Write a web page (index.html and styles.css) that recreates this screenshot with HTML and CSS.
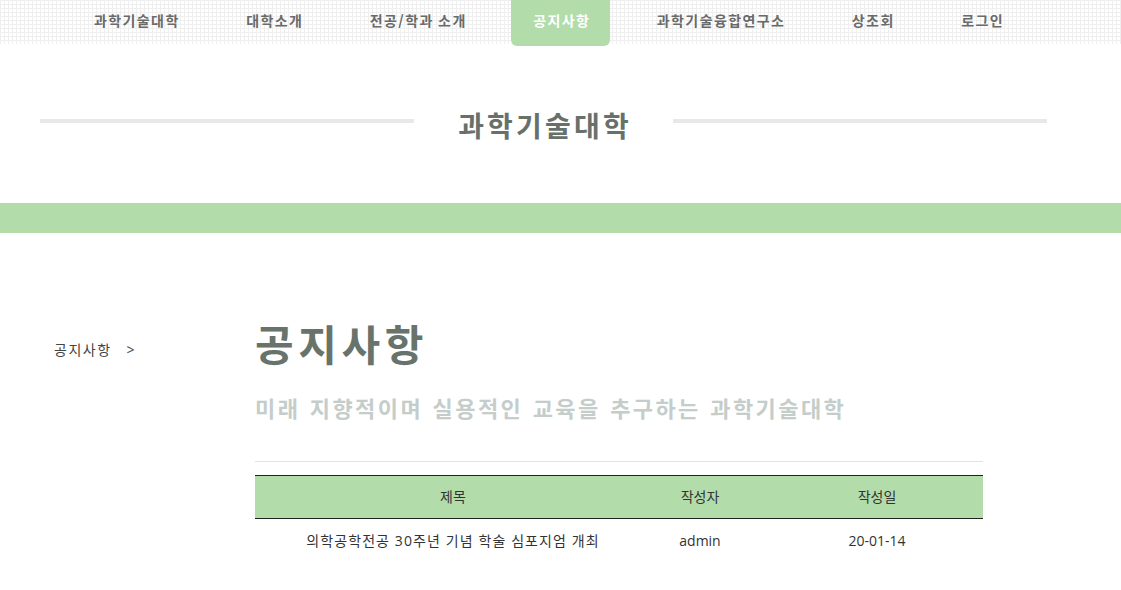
FILE: index.html
```html
<!DOCTYPE html>
<html lang="ko">
<head>
<meta charset="utf-8">
<title>공지사항 - 과학기술대학</title>
<link rel="stylesheet" href="styles.css">
</head>
<body>
<nav class="gnb">
  <ul class="gnb-list">
    <li class="gnb-item">과학기술대학</li>
    <li class="gnb-item">대학소개</li>
    <li class="gnb-item">전공/학과 소개</li>
    <li class="gnb-item active">공지사항</li>
    <li class="gnb-item">과학기술융합연구소</li>
    <li class="gnb-item">상조회</li>
    <li class="gnb-item">로그인</li>
  </ul>
</nav>

<header class="site-head">
  <div class="head-row">
    <span class="head-line"></span>
    <h1 class="head-title">과학기술대학</h1>
    <span class="head-line"></span>
  </div>
</header>

<div class="band"></div>

<main class="main">
  <aside class="side">
    <span class="side-link">공지사항</span><span class="side-arrow">&gt;</span>
  </aside>
  <section class="content">
    <h2 class="page-title">공지사항</h2>
    <p class="page-sub">미래 지향적이며 실용적인 교육을 추구하는 과학기술대학</p>
    <div class="divider"></div>
    <div class="board">
      <div class="board-row board-head">
        <div class="c1">제목</div>
        <div class="c2">작성자</div>
        <div class="c3">작성일</div>
      </div>
      <div class="board-row board-body">
        <div class="c1 subject">의학공학전공 30주년 기념 학술 심포지엄 개최</div>
        <div class="c2">admin</div>
        <div class="c3">20-01-14</div>
      </div>
    </div>
  </section>
</main>
</body>
</html>
```

FILE: styles.css
```css
* { box-sizing: border-box; }
body {
  margin: 0;
  background: #fff;
  font-family: "Open Sans", "Noto Sans CJK KR", sans-serif;
  color: #333;
}

/* top navigation */
.gnb {
  height: 44px;
  background-color: #fff;
  background-image:
    linear-gradient(#efefef 1px, transparent 1px),
    linear-gradient(90deg, #efefef 1px, transparent 1px);
  background-size: 4px 4px;
}
.gnb-list {
  list-style: none;
  margin: 0;
  padding: 0 0 0 72px;
  display: flex;
  gap: 24.5px;
}
.gnb-item {
  padding: 0 20px 0 22px;
  height: 42px;
  line-height: 41px;
  font-family: "Noto Sans CJK KR", sans-serif;
  font-size: 14px;
  font-weight: 700;
  color: #6a6a6a;
  letter-spacing: 1.4px;
  word-spacing: -1px;
  white-space: nowrap;
}
.gnb-item.active {
  height: 46px;
  background: #b2ddab;
  color: #fff;
  border-radius: 0 0 6px 6px;
}

/* header */
.site-head {
  padding: 62px 0 59px;
}
.head-row {
  margin-left: 40px;
  width: 1007px;
  display: flex;
  align-items: center;
}
.head-line {
  flex: 1;
  height: 4px;
  background: #e8e8e8;
  margin-bottom: 8px;
}
.head-title {
  margin: 0;
  padding: 0 41px 0 44px;
  font-family: "Noto Sans CJK KR", sans-serif;
  font-size: 28px;
  line-height: 38px;
  font-weight: 700;
  letter-spacing: 3.2px;
  color: #67716c;
}

.band {
  height: 30px;
  background: #b2ddab;
}

/* main */
.main {
  display: flex;
  padding: 85px 0 0 54px;
}
.side {
  width: 201px;
  flex-shrink: 0;
  margin-top: 21px;
  font-family: "Noto Sans CJK KR", sans-serif;
  font-size: 14px;
  line-height: 20px;
  color: #444;
}
.side-link { letter-spacing: 1.5px; }
.side-arrow {
  margin-left: 15px;
  font-family: "Open Sans", sans-serif;
}
.content {
  width: 728px;
}
.page-title {
  margin: 0;
  font-family: "Noto Sans CJK KR", sans-serif;
  font-size: 42px;
  line-height: 50px;
  font-weight: 700;
  letter-spacing: 4.6px;
  color: #67736b;
}
.page-sub {
  margin: 24px 0 0;
  font-family: "Noto Sans CJK KR", sans-serif;
  font-size: 22px;
  line-height: 30px;
  font-weight: 700;
  color: #c5cdca;
  letter-spacing: 2.4px;
  word-spacing: 1px;
  white-space: nowrap;
}
.divider {
  margin-top: 39px;
  height: 1px;
  background: #e2e2e2;
}
.board {
  margin-top: 13px;
  border-top: 1px solid #222;
}
.board-row {
  display: grid;
  grid-template-columns: 396px 98px 1fr;
  text-align: center;
  font-size: 14px;
}
.board-row .c3 { padding-left: 22px; }
.board-head {
  height: 43px;
  line-height: 42px;
  background: #b2ddab;
  border-bottom: 1px solid #222;
  color: #333;
}
.board-body {
  height: 46px;
  line-height: 44px;
  color: #333;
}
.subject { letter-spacing: 1.1px; }
```
